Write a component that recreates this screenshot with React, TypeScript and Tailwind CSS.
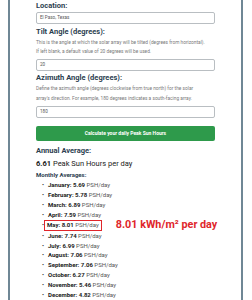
const months = [
  { name: "January", value: "5.69" },
  { name: "February", value: "5.78" },
  { name: "March", value: "6.89" },
  { name: "April", value: "7.59" },
  { name: "May", value: "8.01" },
  { name: "June", value: "7.74" },
  { name: "July", value: "6.99" },
  { name: "August", value: "7.06" },
  { name: "September", value: "7.06" },
  { name: "October", value: "6.27" },
  { name: "November", value: "5.46" },
  { name: "December", value: "4.82" },
];

const Label = ({ children }: { children: React.ReactNode }) => (
  <div className="text-[7.5px] leading-[12px] font-bold text-[#2c3e50]">{children}</div>
);

const Help = ({ children }: { children: React.ReactNode }) => (
  <p className="text-[4.8px] text-[#7a7a7a]">{children}</p>
);

const Input = ({ value, className }: { value: string; className: string }) => (
  <div
    className={`h-[12px] flex items-center rounded-[2px] border border-[#b9bec2] px-[3px] text-[4.6px] text-[#555] ${className}`}
  >
    {value}
  </div>
);

export default function App() {
  return (
    <div className="w-[252px] h-[300px] overflow-hidden bg-white font-['Roboto',sans-serif]">
      <div className="ml-[8px] w-[235px] h-[300px] border-x-2 border-[#6f8795] pl-[26px] pr-[26px]">
        <div className="text-[7.5px] leading-[11px] font-bold text-[#2c3e50]">Location:</div>
        <Input value="El Paso, Texas" className="mt-[1px]" />

        <div className="mt-[2px]">
          <Label>Tilt Angle (degrees):</Label>
        </div>
        <div className="leading-[9px]">
          <Help>This is the angle at which the solar array will be tilted (degrees from horizontal).</Help>
          <Help>If left blank, a default value of 20 degrees will be used.</Help>
        </div>
        <Input value="20" className="mt-[3px]" />

        <div className="mt-[1px]">
          <Label>Azimuth Angle (degrees):</Label>
        </div>
        <div className="leading-[10px]">
          <Help>Define the azimuth angle (degrees clockwise from true north) for the solar</Help>
          <Help>array's direction. For example, 180 degrees indicates a south-facing array.</Help>
        </div>
        <Input value="180" className="mt-[2px]" />

        <button className="mt-[6px] w-full h-[15px] rounded-[2px] bg-[#2e9a4b] text-white text-[5px] font-bold">
          Calculate your daily Peak Sun Hours
        </button>

        <div className="mt-[3px]">
          <Label>Annual Average:</Label>
        </div>
        <div className="mt-[1px] text-[7.5px] leading-[12px] text-[#222]">
          <span className="font-bold">6.61</span> Peak Sun Hours per day
        </div>
        <div className="text-[6px] leading-[10px] font-bold text-[#2c3e50]">Monthly Averages:</div>

        <ul className="text-[6px] leading-[9.9px] text-[#222]">
          {months.map((m) =>
            m.name === "May" ? (
              <li key={m.name} className="flex items-center h-[11px] pl-[6px] whitespace-nowrap">
                <span className="w-[4px] shrink-0">•</span>
                <span className="shrink-0 flex items-center h-[11px] px-[2px] -ml-[2px] border border-solid border-[#e0262b]">
                  <span className="font-bold">May: {m.value}</span>&nbsp;
                  <span className="text-[#555]">PSH/day</span>
                </span>
                <span className="shrink-0 ml-[14px] text-[10.8px] font-bold text-[#e0262b]">
                  8.01 kWh/m² per day
                </span>
              </li>
            ) : (
              <li key={m.name} className="flex pl-[6px]">
                <span className="w-[6px]">•</span>
                <span className="font-bold">
                  {m.name}: {m.value}
                </span>
                &nbsp;<span className="text-[#555]">PSH/day</span>
              </li>
            )
          )}
        </ul>
      </div>
    </div>
  );
}
